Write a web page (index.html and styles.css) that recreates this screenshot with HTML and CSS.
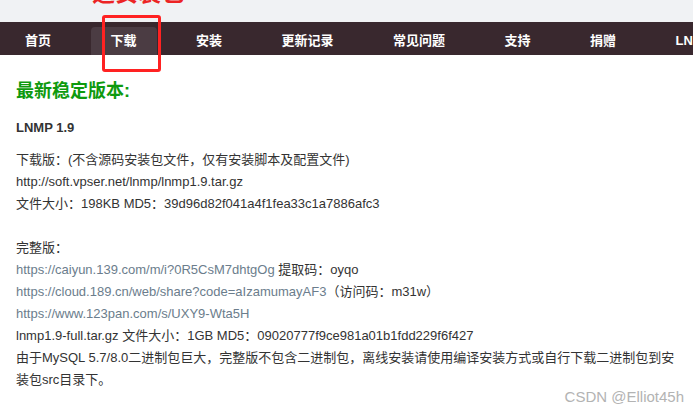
FILE: index.html
```html
<!DOCTYPE html>
<html lang="zh-CN">
<head>
<meta charset="utf-8">
<title>LNMP 下载</title>
<link rel="stylesheet" href="styles.css">
</head>
<body>
<div class="topband"><span class="annot-text">选安装包</span></div>
<nav class="nav">
  <ul class="nav-list">
    <li class="nav-item">首页</li>
    <li class="nav-item active">下载</li>
    <li class="nav-item">安装</li>
    <li class="nav-item">更新记录</li>
    <li class="nav-item">常见问题</li>
    <li class="nav-item">支持</li>
    <li class="nav-item">捐赠</li>
    <li class="nav-item">LNMP</li>
  </ul>
</nav>
<div class="annot-box"></div>
<main class="content">
  <h2 class="title">最新稳定版本:</h2>
  <p class="version">LNMP 1.9</p>
  <div class="block">
    <p class="line">下载版：(不含源码安装包文件，仅有安装脚本及配置文件)</p>
    <p class="line">http://soft.vpser.net/lnmp/lnmp1.9.tar.gz</p>
    <p class="line">文件大小：198KB MD5：39d96d82f041a4f1fea33c1a7886afc3</p>
    <p class="line">&nbsp;</p>
    <p class="line">完整版：</p>
    <p class="line"><a class="link" href="#">https://caiyun.139.com/m/i?0R5CsM7dhtgOg</a> 提取码：oyqo</p>
    <p class="line"><a class="link" href="#">https://cloud.189.cn/web/share?code=aIzamumayAF3</a>（访问码：m31w）</p>
    <p class="line"><a class="link" href="#">https://www.123pan.com/s/UXY9-Wta5H</a></p>
    <p class="line">lnmp1.9-full.tar.gz 文件大小：1GB MD5：09020777f9ce981a01b1fdd229f6f427</p>
    <p class="line">由于MySQL 5.7/8.0二进制包巨大，完整版不包含二进制包，离线安装请使用编译安装方式或自行下载二进制包到安装包src目录下。</p>
  </div>
</main>
<div class="watermark">CSDN @Elliot45h</div>
</body>
</html>
```
FILE: styles.css
```css
html, body {
  margin: 0;
  padding: 0;
  background: #ffffff;
  width: 693px;
  height: 413px;
  overflow: hidden;
}
body {
  font-family: "Liberation Sans", Arial, "Noto Sans CJK SC", sans-serif;
  color: #333333;
  position: relative;
}
.topband {
  height: 22px;
  background: #f0f2f4;
  position: relative;
  overflow: hidden;
}
.annot-text {
  position: absolute;
  left: 92px;
  top: -18px;
  font-size: 23px;
  line-height: 23px;
  font-weight: bold;
  color: #ec2424;
  white-space: nowrap;
}
.nav {
  height: 33px;
  background: #39282e;
  overflow: hidden;
}
.nav-list {
  list-style: none;
  margin: 0;
  padding: 5px 0 0 5px;
  display: flex;
  gap: 19.5px;
  white-space: nowrap;
}
.nav-item {
  flex: none;
  height: 28px;
  line-height: 28px;
  padding: 0 20px;
  font-size: 13px;
  font-weight: bold;
  color: #ffffff;
  border-radius: 4px 4px 0 0;
}
.nav-item.active {
  background: #4b3c43;
}
.annot-box {
  position: absolute;
  left: 102px;
  top: 15px;
  width: 53px;
  height: 51px;
  border: 3px solid #ff2222;
  border-radius: 3px;
}
.content {
  padding: 0 11px 0 16px;
}
.title {
  margin: 24px 0 0;
  font-size: 18px;
  line-height: 24px;
  font-weight: bold;
  color: #0e9a0e;
}
.version {
  margin: 14px 0 0;
  font-size: 13px;
  line-height: 22px;
  font-weight: bold;
  color: #333333;
}
.block {
  margin-top: 10px;
}
.line {
  margin: 0;
  font-size: 13px;
  line-height: 22px;
  color: #333333;
}
.link {
  color: #6b7d8c;
  text-decoration: none;
}
.watermark {
  position: absolute;
  right: 9px;
  top: 389px;
  font-size: 15px;
  line-height: 16px;
  color: #b3b3b3;
  white-space: nowrap;
}
```
